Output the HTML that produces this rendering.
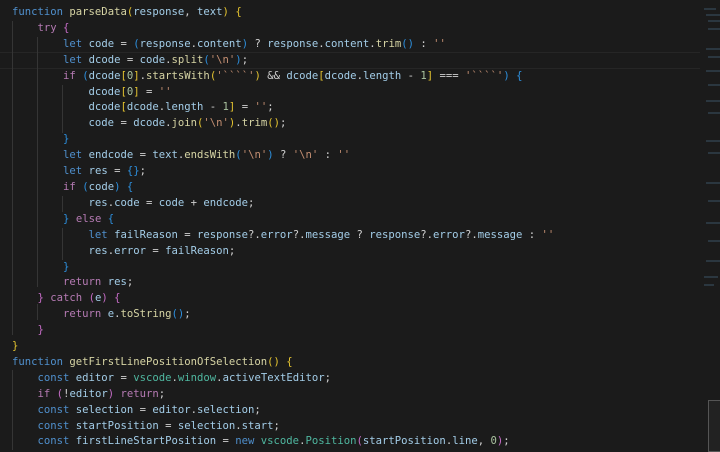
<!DOCTYPE html>
<html><head><meta charset="utf-8"><style>
html,body{margin:0;padding:0;background:#1b1b1b;width:720px;height:450px;overflow:hidden}
pre{position:absolute;left:12px;top:5px;margin:0;font-family:"DejaVu Sans Mono","Liberation Mono",monospace;font-size:10.6px;line-height:15.9px;color:#d0d0d0;letter-spacing:0}
.k{color:#4f8fcc}.c{color:#b57ab3}.f{color:#d6d4a4}.v{color:#a3cde8}.s{color:#c48f72}.n{color:#aac3a0}.t{color:#4fb7a0}
.b1{color:#e5c430}.b2{color:#c56cc6}.b3{color:#2d8fdd}
.g{position:absolute;width:1px;background:#353535}
.hl{position:absolute;left:0;width:700px;top:52px;height:15px;border-top:1px solid #262626;border-bottom:1px solid #262626}
.mm{position:absolute;left:702px;top:0;width:18px;height:295px}
.mm i{position:absolute;height:2px;background:#4a6c88;opacity:.35}
</style></head><body>
<div class="hl"></div>
<div class="g" style="left:12px;top:21px;height:314px"></div>
<div class="g" style="left:37px;top:37px;height:250px"></div>
<div class="g" style="left:37px;top:304px;height:16px"></div>
<div class="g" style="left:62px;top:85px;height:48px"></div>
<div class="g" style="left:62px;top:196px;height:16px"></div>
<div class="g" style="left:62px;top:228px;height:32px"></div>
<div class="g" style="left:12px;top:370px;height:80px"></div>
<pre><span class="k">function</span> <span class="f">parseData</span><span class="b1">(</span><span class="v">response</span>, <span class="v">text</span><span class="b1">)</span> <span class="b1">{</span>
    <span class="c">try</span> <span class="b2">{</span>
        <span class="k">let</span> <span class="v">code</span> = <span class="b3">(</span><span class="v">response</span>.<span class="v">content</span><span class="b3">)</span> ? <span class="v">response</span>.<span class="v">content</span>.<span class="f">trim</span><span class="b3">()</span> : <span class="s">''</span>
        <span class="k">let</span> <span class="v">dcode</span> = <span class="v">code</span>.<span class="f">split</span><span class="b3">(</span><span class="s">'\n'</span><span class="b3">)</span>;
        <span class="c">if</span> <span class="b3">(</span><span class="v">dcode</span><span class="b1">[</span><span class="n">0</span><span class="b1">]</span>.<span class="f">startsWith</span><span class="b1">(</span><span class="s">'&#96;&#96;&#96;&#96;'</span><span class="b1">)</span> &amp;&amp; <span class="v">dcode</span><span class="b1">[</span><span class="v">dcode</span>.<span class="v">length</span> - <span class="n">1</span><span class="b1">]</span> === <span class="s">'&#96;&#96;&#96;&#96;'</span><span class="b3">)</span> <span class="b3">{</span>
            <span class="v">dcode</span><span class="b1">[</span><span class="n">0</span><span class="b1">]</span> = <span class="s">''</span>
            <span class="v">dcode</span><span class="b1">[</span><span class="v">dcode</span>.<span class="v">length</span> - <span class="n">1</span><span class="b1">]</span> = <span class="s">''</span>;
            <span class="v">code</span> = <span class="v">dcode</span>.<span class="f">join</span><span class="b1">(</span><span class="s">'\n'</span><span class="b1">)</span>.<span class="f">trim</span><span class="b1">()</span>;
        <span class="b3">}</span>
        <span class="k">let</span> <span class="v">endcode</span> = <span class="v">text</span>.<span class="f">endsWith</span><span class="b3">(</span><span class="s">'\n'</span><span class="b3">)</span> ? <span class="s">'\n'</span> : <span class="s">''</span>
        <span class="k">let</span> <span class="v">res</span> = <span class="b3">{}</span>;
        <span class="c">if</span> <span class="b3">(</span><span class="v">code</span><span class="b3">)</span> <span class="b3">{</span>
            <span class="v">res</span>.<span class="v">code</span> = <span class="v">code</span> + <span class="v">endcode</span>;
        <span class="b3">}</span> <span class="c">else</span> <span class="b3">{</span>
            <span class="k">let</span> <span class="v">failReason</span> = <span class="v">response</span>?.<span class="v">error</span>?.<span class="v">message</span> ? <span class="v">response</span>?.<span class="v">error</span>?.<span class="v">message</span> : <span class="s">''</span>
            <span class="v">res</span>.<span class="v">error</span> = <span class="v">failReason</span>;
        <span class="b3">}</span>
        <span class="c">return</span> <span class="v">res</span>;
    <span class="b2">}</span> <span class="c">catch</span> <span class="b2">(</span><span class="v">e</span><span class="b2">)</span> <span class="b2">{</span>
        <span class="c">return</span> <span class="v">e</span>.<span class="f">toString</span><span class="b3">()</span>;
    <span class="b2">}</span>
<span class="b1">}</span>
<span class="k">function</span> <span class="f">getFirstLinePositionOfSelection</span><span class="b1">()</span> <span class="b1">{</span>
    <span class="k">const</span> <span class="v">editor</span> = <span class="t">vscode</span>.<span class="t">window</span>.<span class="v">activeTextEditor</span>;
    <span class="c">if</span> <span class="b2">(</span>!<span class="v">editor</span><span class="b2">)</span> <span class="c">return</span>;
    <span class="k">const</span> <span class="v">selection</span> = <span class="v">editor</span>.<span class="v">selection</span>;
    <span class="k">const</span> <span class="v">startPosition</span> = <span class="v">selection</span>.<span class="v">start</span>;
    <span class="k">const</span> <span class="v">firstLineStartPosition</span> = <span class="k">new</span> <span class="t">vscode</span>.<span class="t">Position</span><span class="b2">(</span><span class="v">startPosition</span>.<span class="v">line</span>, <span class="n">0</span><span class="b2">)</span>;</pre>
<div class="mm">
<i style="left:2px;top:8px;width:12px"></i><i style="left:4px;top:14px;width:14px"></i><i style="left:6px;top:20px;width:12px"></i><i style="left:6px;top:28px;width:14px"></i>
<i style="left:4px;top:48px;width:16px"></i><i style="left:6px;top:56px;width:14px"></i><i style="left:4px;top:70px;width:16px"></i><i style="left:6px;top:84px;width:12px"></i>
<i style="left:4px;top:100px;width:16px"></i><i style="left:6px;top:112px;width:14px"></i><i style="left:4px;top:140px;width:16px"></i><i style="left:6px;top:152px;width:12px"></i>
<i style="left:4px;top:182px;width:16px"></i><i style="left:6px;top:200px;width:14px"></i><i style="left:4px;top:222px;width:16px"></i><i style="left:6px;top:240px;width:12px"></i>
<i style="left:4px;top:260px;width:16px"></i><i style="left:2px;top:276px;width:14px"></i><i style="left:2px;top:284px;width:10px"></i>
</div>
<div style="position:absolute;left:708px;top:400px;width:12px;height:50px;border:1px solid #555;background:#222"></div>
</body></html>
